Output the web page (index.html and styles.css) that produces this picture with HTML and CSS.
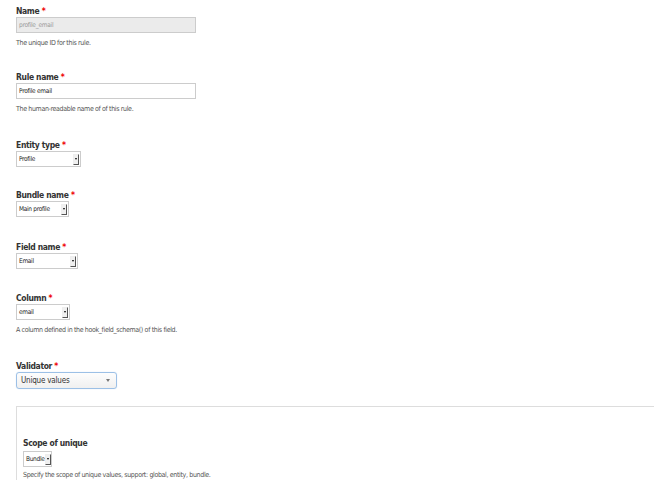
FILE: index.html
```html
<!DOCTYPE html>
<html>
<head>
<meta charset="utf-8">
<link rel="stylesheet" href="styles.css">
</head>
<body>
<form class="form">
  <div class="item item-name">
    <label class="label">Name <span class="req">*</span></label>
    <div class="input disabled">profile_email</div>
    <div class="desc">The unique ID for this rule.</div>
  </div>
  <div class="item item-rule">
    <label class="label">Rule name <span class="req">*</span></label>
    <div class="input">Profile email</div>
    <div class="desc">The human-readable name of of this rule.</div>
  </div>
  <div class="item item-entity">
    <label class="label">Entity type <span class="req">*</span></label>
    <div class="select w-entity"><span class="val">Profile</span><span class="btn"><i></i></span></div>
  </div>
  <div class="item item-bundle">
    <label class="label">Bundle name <span class="req">*</span></label>
    <div class="select w-bundle"><span class="val">Main profile</span><span class="btn"><i></i></span></div>
  </div>
  <div class="item item-field">
    <label class="label">Field name <span class="req">*</span></label>
    <div class="select w-field"><span class="val">Email</span><span class="btn"><i></i></span></div>
  </div>
  <div class="item item-column">
    <label class="label">Column <span class="req">*</span></label>
    <div class="select w-column"><span class="val">email</span><span class="btn"><i></i></span></div>
    <div class="desc">A column defined in the hook_field_schema() of this field.</div>
  </div>
  <div class="item item-validator">
    <label class="label">Validator <span class="req">*</span></label>
    <div class="vselect"><span class="val">Unique values</span><span class="arrow"></span></div>
  </div>
  <fieldset class="fieldset">
    <div class="item item-scope">
      <label class="label">Scope of unique</label>
      <div class="select w-scope"><span class="val">Bundle</span><span class="btn"><i></i></span></div>
      <div class="desc">Specify the scope of unique values, support: global, entity, bundle.</div>
    </div>
  </fieldset>
</form>
</body>
</html>
```

FILE: styles.css
```css
html, body {
  margin: 0;
  padding: 0;
  background: #fff;
  overflow: hidden;
}
body {
  font-family: "DejaVu Sans Condensed", "DejaVu Sans", sans-serif;
  color: #333;
  height: 488px;
}
.form {
  padding: 6px 0 0 16px;
}
.item {
  display: flex;
  flex-direction: column;
  align-items: flex-start;
}
.label {
  display: block;
  font-weight: bold;
  font-size: 8.5px;
  letter-spacing: -0.35px;
  line-height: 10px;
  height: 10px;
  color: #333;
  margin-bottom: 1px;
}
.req {
  color: #e00;
}
.input {
  box-sizing: border-box;
  width: 180px;
  height: 16px;
  border: 1px solid #ccc;
  font-size: 6.5px;
  letter-spacing: -0.25px;
  line-height: 14px;
  padding: 0 2px;
  color: #222;
  background: #fff;
}
.input.disabled {
  background: #ebebeb;
  color: #999;
}
.desc {
  font-size: 7px;
  letter-spacing: -0.35px;
  line-height: 10px;
  color: #555;
  margin-top: 5px;
}
.item-rule { margin-top: 24px; }
.item-entity { margin-top: 26px; }
.item-bundle { margin-top: 23px; }
.item-field { margin-top: 25px; }
.item-column { margin-top: 24px; }
.item-validator { margin-top: 26px; }

.select {
  box-sizing: border-box;
  height: 16px;
  border: 1px solid #ccc;
  display: flex;
  align-items: center;
  justify-content: space-between;
  padding: 0 1px 0 2px;
  background: #fff;
}
.select .val {
  font-size: 6.5px;
  letter-spacing: -0.3px;
  color: #222;
}
.select .btn {
  flex: none;
  width: 6px;
  height: 11px;
  box-sizing: border-box;
  border-right: 1px solid #555;
  border-bottom: 1px solid #555;
  border-left: 1px solid #eee;
  border-top: 1px solid #eee;
  background: #f0f0f0;
  display: flex;
  align-items: center;
  justify-content: center;
}
.select .btn i {
  width: 0;
  height: 0;
  border-left: 1.5px solid transparent;
  border-right: 1.5px solid transparent;
  border-top: 2px solid #000;
}
.w-entity { width: 65px; }
.w-bundle { width: 53px; }
.w-field { width: 62px; }
.w-column { width: 54px; }
.w-scope { width: 29px; }

.vselect {
  box-sizing: border-box;
  width: 101px;
  height: 17px;
  border: 1px solid #9cc0e6;
  border-radius: 3px;
  background: linear-gradient(#fdfdfd, #f0f0f0);
  display: flex;
  align-items: center;
  justify-content: space-between;
  padding: 0 6px 0 4px;
  box-shadow: 0 0 1px #bcd5f0;
}
.vselect .val {
  font-size: 8px;
  letter-spacing: -0.2px;
  color: #333;
}
.vselect .arrow {
  width: 0;
  height: 0;
  border-left: 2px solid transparent;
  border-right: 2px solid transparent;
  border-top: 3px solid #777;
}

.fieldset {
  margin: 17px 0 0 0;
  padding: 31px 0 0 6px;
  border: 1px solid #ddd;
  border-right: none;
  border-bottom: none;
  min-width: 0;
}
.fieldset .label {
  margin-bottom: 3px;
}
.fieldset .desc {
  margin-top: 3px;
}
```
